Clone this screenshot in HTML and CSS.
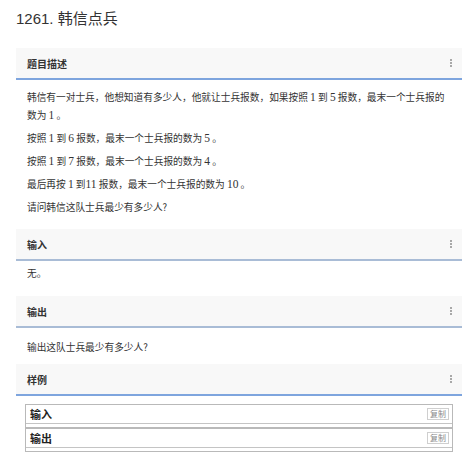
FILE: index.html
```html
<!DOCTYPE html>
<html lang="zh-CN">
<head>
<meta charset="utf-8">
<link rel="stylesheet" href="styles.css">
</head>
<body>
<div class="page">
  <h1 class="title">1261. 韩信点兵</h1>

  <section class="card">
    <div class="card-head active"><span>题目描述</span><i class="dots"><b></b><b></b><b></b></i></div>
    <div class="card-body desc">
      <p class="nowrap">韩信有一对士兵，他想知道有多少人，他就让士兵报数，如果按照 <span class="m">1</span> 到 <span class="m">5</span> 报数，最末一个士兵报的<br>数为 <span class="m">1</span> 。</p>
      <p>按照 <span class="m">1</span> 到 <span class="m">6</span> 报数，最末一个士兵报的数为 <span class="m">5</span> 。</p>
      <p>按照 <span class="m">1</span> 到 <span class="m">7</span> 报数，最末一个士兵报的数为 <span class="m">4</span> 。</p>
      <p>最后再按 <span class="m">1</span> 到<span class="m">11</span> 报数，最末一个士兵报的数为 <span class="m">10</span> 。</p>
      <p>请问韩信这队士兵最少有多少人?</p>
    </div>
  </section>

  <section class="card">
    <div class="card-head"><span>输入</span><i class="dots"><b></b><b></b><b></b></i></div>
    <div class="card-body in">
      <p>无。</p>
    </div>
  </section>

  <section class="card">
    <div class="card-head"><span>输出</span><i class="dots"><b></b><b></b><b></b></i></div>
    <div class="card-body out">
      <p>输出这队士兵最少有多少人?</p>
    </div>
  </section>

  <section class="card">
    <div class="card-head active"><span>样例</span><i class="dots"><b></b><b></b><b></b></i></div>
    <div class="samples">
      <div class="sample">
        <div class="sample-head"><span>输入</span><button class="copy">复制</button></div>
        <div class="sample-body"></div>
      </div>
      <div class="sample">
        <div class="sample-head"><span>输出</span><button class="copy">复制</button></div>
        <div class="sample-body"></div>
      </div>
    </div>
  </section>
</div>
</body>
</html>
```

FILE: styles.css
```css
* { box-sizing: border-box; }
html, body { margin: 0; padding: 0; background: #fff; }
body {
  font-family: "Noto Sans CJK SC", "Liberation Sans", sans-serif;
  color: #333;
}
.page {
  width: 446px;
  margin-left: 16px;
}
.title {
  margin: 7px 0 17px;
  font-family: "Liberation Sans", "Noto Sans CJK SC", sans-serif;
  font-weight: normal;
  font-size: 15px;
  line-height: 24px;
  color: #333;
}
.card-head {
  height: 32px;
  background: #f8f8f8;
  border-bottom: 2px solid #a9bcd6;
  display: flex;
  align-items: center;
  justify-content: space-between;
  padding: 0 10px 0 11px;
  font-size: 10px;
  font-weight: bold;
  color: #333;
}
.card-head.active { border-bottom-color: #7ea5de; }
.dots {
  display: flex;
  flex-direction: column;
  gap: 1px;
}
.dots b {
  display: block;
  width: 2px;
  height: 2px;
  background: #a8a8a8;
}
.card-body {
  padding: 0 11px;
  font-size: 9.7px;
  line-height: 18px;
  color: #333;
}
.card-body p { margin: 0; }
.desc { padding-top: 8px; padding-bottom: 13px; }
.desc p + p { margin-top: 5px; }
.nowrap { white-space: nowrap; }
.m {
  font-family: "Liberation Serif", serif;
  font-size: 11.5px;
}
.in { padding-top: 3px; padding-bottom: 14px; }
.out { padding-top: 10px; padding-bottom: 8px; }
.samples {
  padding: 8px 9px 0;
}
.sample {
  border: 1px solid #b9b9b9;
}
.sample-head {
  height: 19px;
  border-bottom: 1px solid #c4c4c4;
  display: flex;
  align-items: center;
  justify-content: space-between;
  padding: 0 3px 0 4px;
  font-size: 11px;
  font-weight: bold;
  color: #222;
}
.sample-body { height: 3px; }
.copy {
  font-family: "Noto Sans CJK SC", sans-serif;
  font-size: 8px;
  line-height: 10px;
  padding: 0 2px;
  border: 1px solid #cfcfcf;
  background: #fff;
  color: #888;
  font-weight: normal;
  border-radius: 0;
}
```
